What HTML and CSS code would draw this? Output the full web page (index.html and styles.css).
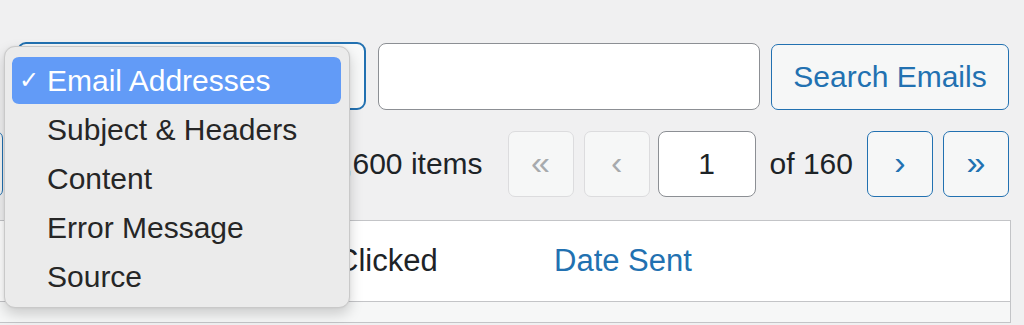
FILE: index.html
```html
<!DOCTYPE html>
<html>
<head>
<meta charset="utf-8">
<link rel="stylesheet" href="styles.css">
</head>
<body>
<div class="page">
  <div class="search-row">
    <div class="select-box"></div>
    <input class="search-input" type="text">
    <button class="btn search-btn">Search Emails</button>
  </div>
  <div class="nav-row">
    <div class="bulk">
      <button class="btn apply-btn">Apply</button>
    </div>
    <div class="pagination">
      <span class="count">1,600 items</span>
      <span class="page-btn disabled">«</span>
      <span class="page-btn disabled prev">‹</span>
      <input class="page-input" type="text" value="1">
      <span class="of">of 160</span>
      <span class="page-btn">›</span>
      <span class="page-btn">»</span>
    </div>
  </div>
  <div class="table">
    <div class="thead">
      <span class="col col-subject"></span>
      <span class="col col-clicked">Clicked</span>
      <span class="col col-date">Date Sent</span>
    </div>
    <div class="trow"></div>
  </div>

  <ul class="dropdown">
    <li class="item selected"><span class="check">✓</span>Email Addresses</li>
    <li class="item">Subject &amp; Headers</li>
    <li class="item">Content</li>
    <li class="item">Error Message</li>
    <li class="item">Source</li>
  </ul>
</div>
</body>
</html>
```

FILE: styles.css
```css
html, body {
  margin: 0;
  padding: 0;
  background: #f0f0f1;
  font-family: "Liberation Sans", Arial, sans-serif;
  color: #1d2327;
  overflow: hidden;
}

.page {
  position: relative;
  width: 1024px;
  height: 325px;
  padding-right: 15px;
  box-sizing: border-box;
  overflow: hidden;
}

.search-row {
  display: flex;
  align-items: flex-start;
  padding-top: 42px;
  padding-left: 17px;
}

.select-box {
  width: 349px;
  height: 68px;
  box-sizing: border-box;
  border: 2px solid #2271b1;
  border-radius: 9px;
  background: #f8f9f9;
}

.search-input {
  margin-left: 12px;
  margin-top: 1px;
  width: 382px;
  height: 67px;
  box-sizing: border-box;
  border: 1.5px solid #8c8f94;
  border-radius: 8px;
  background: #fff;
  outline: none;
}

.btn {
  font-family: "Liberation Sans", Arial, sans-serif;
  font-size: 30px;
  color: #2271b1;
  background: #f6f7f7;
  border: 1.5px solid #2271b1;
  border-radius: 7px;
  box-sizing: border-box;
  padding: 0;
}

.search-btn {
  margin-left: 11px;
  margin-top: 2px;
  width: 238px;
  height: 66px;
}

.nav-row {
  display: flex;
  justify-content: space-between;
  align-items: center;
  margin-top: 21px;
  height: 66px;
}

.bulk {
  display: flex;
  align-items: center;
}

.apply-btn {
  width: 90px;
  height: 66px;
  margin-left: -87px;
  text-align: right;
  padding-right: 2px;
}

.pagination {
  display: flex;
  align-items: center;
}

.count {
  font-size: 30px;
  margin-right: 25px;
}

.page-btn {
  width: 66px;
  height: 66px;
  box-sizing: border-box;
  border: 1.5px solid #2271b1;
  border-radius: 7px;
  background: #f6f7f7;
  color: #2271b1;
  font-size: 34px;
  display: flex;
  align-items: center;
  justify-content: center;
  margin-left: 10px;
  padding-bottom: 4px;
}

.page-btn.disabled {
  border-color: #dcdcde;
  color: #a7aaad;
  margin-left: 0;
}

.page-btn.prev {
  margin-left: 10px;
}

.page-input {
  margin-left: 8px;
  width: 98px;
  height: 66px;
  box-sizing: border-box;
  border: 1.5px solid #8c8f94;
  border-radius: 8px;
  background: #fff;
  text-align: center;
  font-family: "Liberation Sans", Arial, sans-serif;
  font-size: 30px;
  color: #1d2327;
  outline: none;
}

.of {
  font-size: 30px;
  margin-left: 14px;
  margin-right: 4px;
}

.table {
  margin-top: 23px;
  margin-left: -2px;
  margin-right: -2px;
  border: 1.5px solid #c3c4c7;
  background: #fff;
}

.thead {
  display: flex;
  align-items: center;
  height: 80px;
  border-bottom: 1.5px solid #c3c4c7;
  font-size: 31px;
}

.col-subject {
  width: 337px;
}

.col-clicked {
  width: 218px;
}

.col-date {
  color: #2271b1;
}

.trow {
  height: 20px;
  background: #f6f7f7;
}

.dropdown {
  position: absolute;
  left: 4px;
  top: 46px;
  width: 346px;
  box-sizing: border-box;
  margin: 0;
  padding: 9px 8px 6px 7px;
  list-style: none;
  background: #ebebeb;
  border: 1px solid #c9c9c9;
  border-radius: 11px;
  box-shadow: 0 6px 14px rgba(0, 0, 0, 0.18), 0 0 2px rgba(0, 0, 0, 0.08);
}

.item {
  position: relative;
  height: 49px;
  line-height: 47px;
  padding-left: 35px;
  font-size: 30px;
  color: #262626;
  border-top: 1px solid transparent;
  border-bottom: 1px solid transparent;
  box-sizing: border-box;
  background-clip: padding-box;
  border-radius: 7px;
}

.item.selected {
  background-color: #629bf7;
  color: #fff;
}

.check {
  position: absolute;
  left: 7px;
  top: 0;
  font-size: 24px;
  font-family: "DejaVu Sans", sans-serif;
}
```
